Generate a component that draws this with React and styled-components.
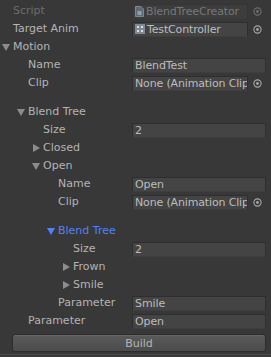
import React from "react";
import styled, { createGlobalStyle } from "styled-components";

const Global = createGlobalStyle`
  html, body { margin: 0; padding: 0; background: #383838; }
  body { font-family: "DejaVu Sans", "Liberation Sans", sans-serif; font-size: 11px; }
`;

const Panel = styled.div`
  width: 271px;
  height: 357px;
  background: #383838;
  padding-top: 2px;
  box-sizing: border-box;
  overflow: hidden;
  display: flex;
  flex-direction: column;
`;

const Row = styled.div`
  height: 18px;
  display: flex;
  align-items: center;
  margin-bottom: ${(p) => (p.$gap ? p.$gap : 0)}px;
`;

const Label = styled.div`
  width: ${(p) => 132 - p.$indent}px;
  padding-left: ${(p) => p.$indent}px;
  flex: none;
  box-sizing: content-box;
  color: ${(p) => (p.$disabled ? "#6c6c6c" : p.$blue ? "#5283f4" : "#b4b4b4")};
  display: flex;
  align-items: center;
  white-space: nowrap;
  position: relative;
  line-height: 18px;
`;

const Arrow = styled.svg`
  position: absolute;
  left: ${(p) => p.$indent - 11}px;
  top: 5px;
`;

const Field = styled.div`
  flex: none;
  width: ${(p) => (p.$object ? 116 : 134)}px;
  height: 15px;
  box-sizing: border-box;
  background: ${(p) => (p.$disabled ? "#3d3d3d" : "#444444")};
  border: 1px solid ${(p) => (p.$disabled ? "#353535" : "#2e2e2e")};
  border-bottom-color: ${(p) => (p.$disabled ? "#3a3a3a" : "#3e3e3e")};
  color: ${(p) => (p.$disabled ? "#787878" : "#bcbcbc")};
  display: flex;
  align-items: center;
  gap: 2px;
  padding-left: 2px;
  letter-spacing: ${(p) => (p.$object ? "-0.15px" : "-0.1px")};
  white-space: nowrap;
  overflow: hidden;
  line-height: 13px;
`;

const Picker = styled.div`
  flex: none;
  width: 18px;
  display: flex;
  justify-content: center;
  align-items: center;
`;

const ButtonRow = styled.div`
  padding: 4px 5px 0 12px;
`;

const Button = styled.div`
  height: 18px;
  border-radius: 3px;
  background: linear-gradient(#5a5a5a, #4c4c4c);
  border: 1px solid #2c2c2c;
  box-sizing: border-box;
  color: #b4b4b4;
  display: flex;
  align-items: center;
  justify-content: center;
  box-shadow: inset 0 1px 0 #666;
`;

const BottomLine = styled.div`
  margin-top: 2px;
  height: 1px;
  background: #4a4a4a;
`;

function TriangleIcon({ open, blue, indent }) {
  const c = blue ? "#5283f4" : "#8c8c8c";
  return (
    <Arrow $indent={indent} width="8" height="8" viewBox="0 0 8 8">
      {open ? (
        <polygon points="0,1 8,1 4,8" fill={c} />
      ) : (
        <polygon points="1,0 8,4 1,8" fill={c} />
      )}
    </Arrow>
  );
}

function ScriptIcon() {
  return (
    <svg width="9" height="11" viewBox="0 0 9 11">
      <path d="M0.5 0.5 H6 L8.5 3 V10.5 H0.5 Z" fill="#5f6a74" stroke="#7d8790" strokeWidth="1" />
      <rect x="2.5" y="5" width="4" height="4" fill="#8fa0ae" />
    </svg>
  );
}

function ControllerIcon() {
  return (
    <svg width="10" height="10" viewBox="0 0 10 10">
      <rect x="0" y="0" width="10" height="10" fill="#7f8a94" />
      <rect x="2" y="2" width="2" height="2" fill="#d8dde2" />
      <rect x="6" y="2" width="2" height="2" fill="#d8dde2" />
      <rect x="2" y="6" width="2" height="2" fill="#d8dde2" />
      <rect x="6" y="6" width="2" height="2" fill="#d8dde2" />
    </svg>
  );
}

function Target({ dim }) {
  const c = dim ? "#6e6e6e" : "#a8a8a8";
  return (
    <svg width="9" height="9" viewBox="0 0 9 9">
      <circle cx="4.5" cy="4.5" r="3.6" fill="none" stroke={c} strokeWidth="1.1" />
      <circle cx="4.5" cy="4.5" r="1.4" fill={c} />
    </svg>
  );
}

const rows = [
  { label: "Script", indent: 13, kind: "object", value: "BlendTreeCreator", icon: "script", disabled: true },
  { label: "Target Anim", indent: 13, kind: "object", value: "TestController", icon: "controller" },
  { label: "Motion", indent: 13, fold: "open" },
  { label: "Name", indent: 28, kind: "text", value: "BlendTest" },
  { label: "Clip", indent: 28, kind: "object", value: "None (Animation Clip", gap: 11 },
  { label: "Blend Tree", indent: 28, fold: "open" },
  { label: "Size", indent: 43, kind: "text", value: "2" },
  { label: "Closed", indent: 43, fold: "closed" },
  { label: "Open", indent: 43, fold: "open" },
  { label: "Name", indent: 58, kind: "text", value: "Open" },
  { label: "Clip", indent: 58, kind: "object", value: "None (Animation Clip", gap: 11 },
  { label: "Blend Tree", indent: 58, fold: "open", blue: true },
  { label: "Size", indent: 73, kind: "text", value: "2" },
  { label: "Frown", indent: 73, fold: "closed" },
  { label: "Smile", indent: 73, fold: "closed" },
  { label: "Parameter", indent: 58, kind: "text", value: "Smile" },
  { label: "Parameter", indent: 28, kind: "text", value: "Open" },
];

export default function App() {
  return (
    <>
      <Global />
      <Panel>
        {rows.map((r, i) => (
          <Row key={i} $gap={r.gap}>
            <Label $indent={r.indent} $disabled={r.disabled} $blue={r.blue}>
              {r.fold && <TriangleIcon open={r.fold === "open"} blue={r.blue} indent={r.indent} />}
              {r.label}
            </Label>
            {r.kind === "text" && <Field>{r.value}</Field>}
            {r.kind === "object" && (
              <>
                <Field $object $disabled={r.disabled}>
                  {r.icon === "script" && <ScriptIcon />}
                  {r.icon === "controller" && <ControllerIcon />}
                  {r.value}
                </Field>
                <Picker>
                  <Target dim={r.disabled} />
                </Picker>
              </>
            )}
          </Row>
        ))}
        <ButtonRow>
          <Button>Build</Button>
        </ButtonRow>
        <BottomLine />
      </Panel>
    </>
  );
}
